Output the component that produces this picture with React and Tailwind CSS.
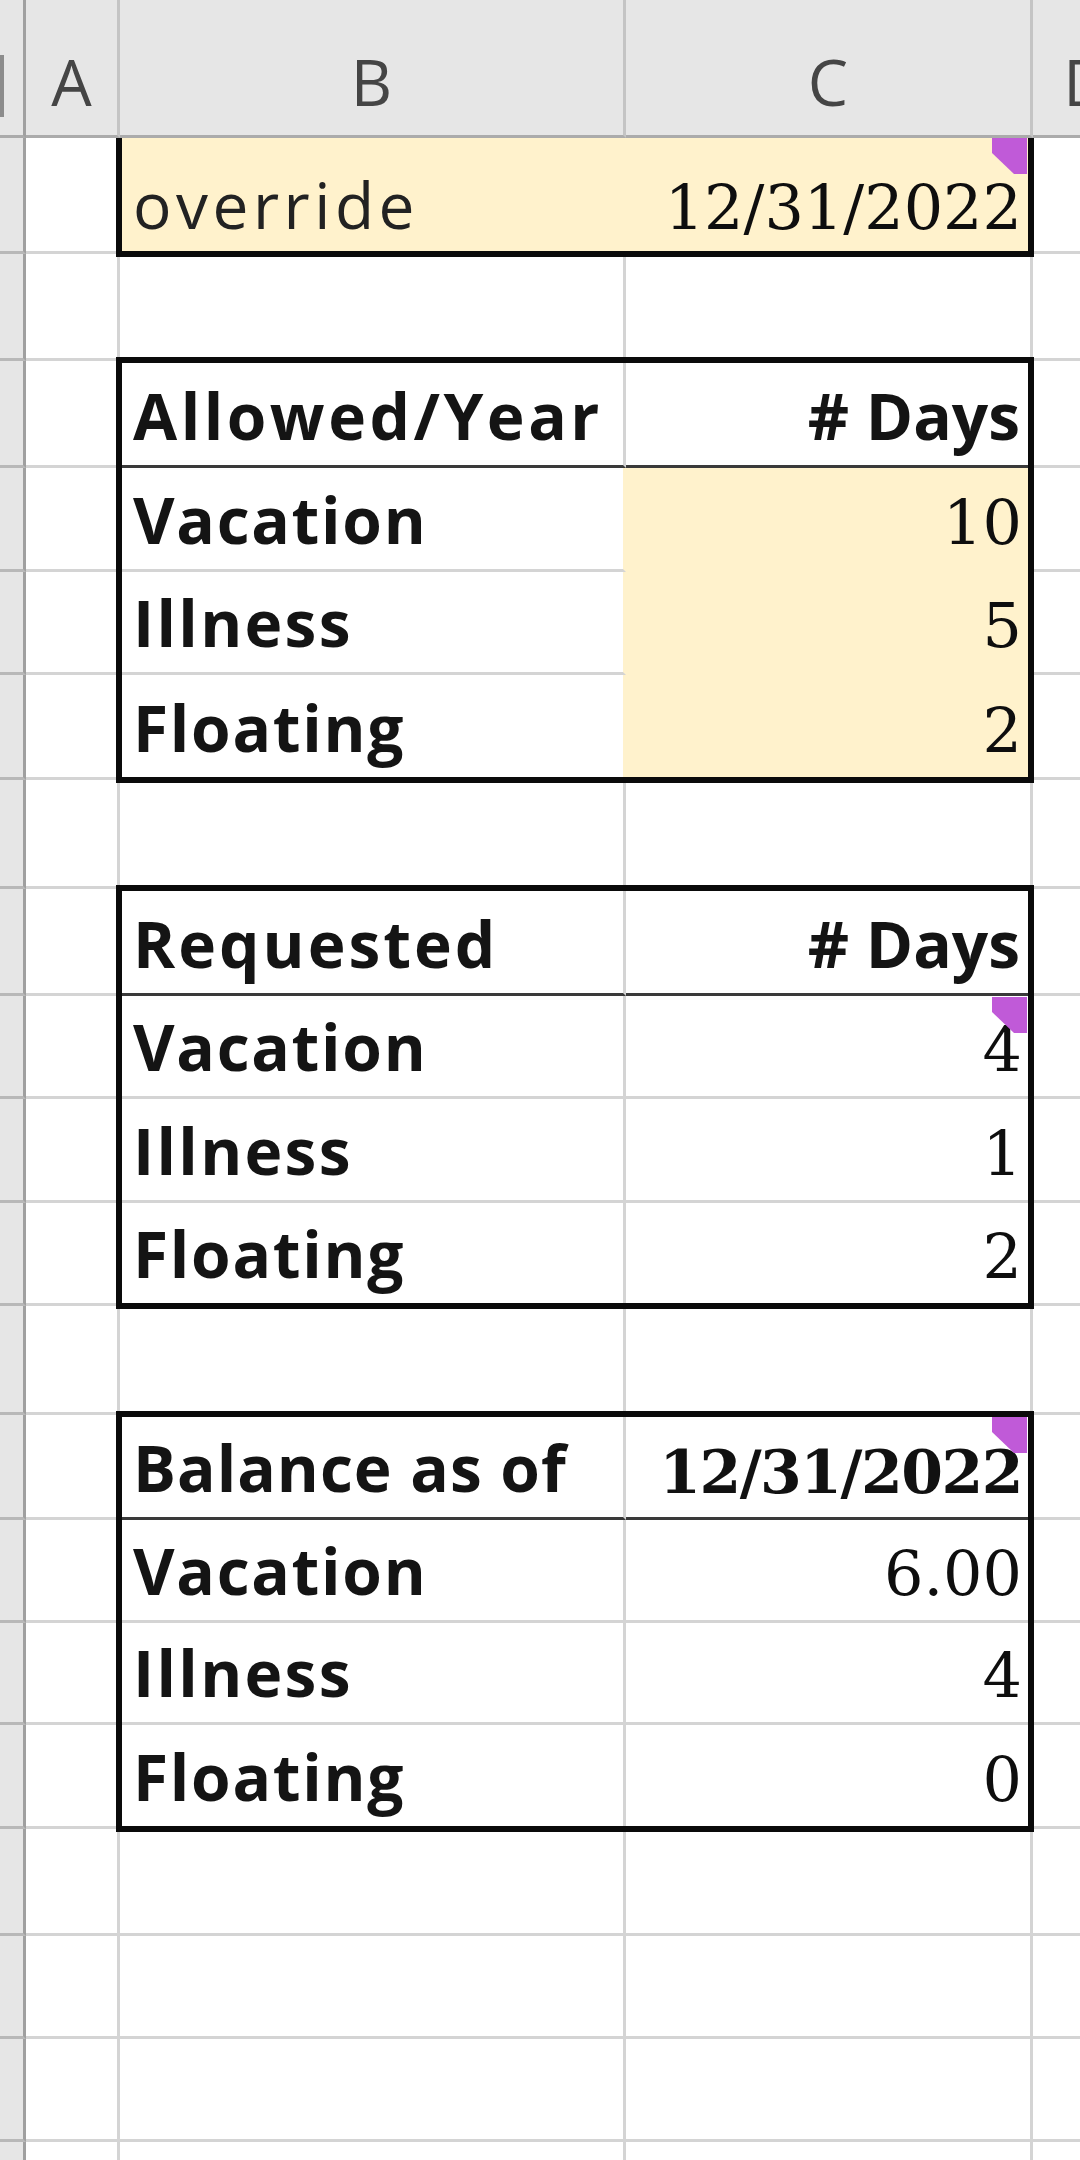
import React from "react";

const GRID =
  "grid w-max grid-cols-[26px_94px_506px_407px_110px] grid-rows-[138px_116px_107px_107px_104px_103px_105px_109px_107px_103px_104px_103px_109px_105px_103px_102px_104px_107px_103px_103px_60px]";

const SANS_LABEL = "font-['Open_Sans',sans-serif] font-bold text-[64px] leading-none text-[#141414] whitespace-nowrap";
const SANS_DAYS = "font-['Open_Sans',sans-serif] font-bold text-[64px] leading-none text-[#141414] whitespace-nowrap";
const SANS_REG = "font-['Open_Sans',sans-serif] font-normal text-[64px] tracking-[4.5px] leading-none text-[#222] whitespace-nowrap";
const SERIF_REG = "font-['DejaVu_Serif',serif] font-normal text-[62px] leading-none text-[#0e0e0e] whitespace-nowrap";
const SERIF_BOLD = "font-['DejaVu_Serif',serif] font-bold text-[60px] tracking-[-1.5px] leading-none text-[#111] whitespace-nowrap";

const GL = "bg-white border-r-[3px] border-b-[3px] border-[#d4d4d4]";
const ROWHEAD = "bg-[#e6e6e6] border-r-[3px] border-b-[3px] border-r-[#a0a0a0] border-b-[#b8b8b8]";

const rows = [
  { kind: "override" },
  { kind: "empty" },
  { kind: "head", label: "Allowed/Year", tr: "tracking-[3.5px]", value: "# Days" },
  { kind: "data", label: "Vacation", tr: "tracking-[1.7px]", value: "10", fill: true },
  { kind: "data", label: "Illness", tr: "tracking-[2.3px]", value: "5", fill: true },
  { kind: "data", label: "Floating", tr: "tracking-[1.7px]", value: "2", fill: true },
  { kind: "empty" },
  { kind: "head", label: "Requested", tr: "tracking-[3px]", value: "# Days" },
  { kind: "data", label: "Vacation", tr: "tracking-[1.7px]", value: "4" },
  { kind: "data", label: "Illness", tr: "tracking-[2.3px]", value: "1" },
  { kind: "data", label: "Floating", tr: "tracking-[1.7px]", value: "2" },
  { kind: "empty" },
  { kind: "head", label: "Balance as of", tr: "tracking-[1px]", value: "12/31/2022", serifBold: true },
  { kind: "data", label: "Vacation", tr: "tracking-[1.7px]", value: "6.00" },
  { kind: "data", label: "Illness", tr: "tracking-[2.3px]", value: "4" },
  { kind: "data", label: "Floating", tr: "tracking-[1.7px]", value: "0" },
  { kind: "empty" },
  { kind: "empty" },
  { kind: "empty" },
  { kind: "empty" },
];

function BCell({ row }) {
  if (row.kind === "override")
    return (
      <div className="bg-[#fff2cc] border-r-[3px] border-b-[3px] border-[#fff2cc] flex items-end pl-[13px] pb-[14px]">
        <span className={SANS_REG}>override</span>
      </div>
    );
  if (row.kind === "head")
    return (
      <div className="bg-white border-r-[3px] border-b-[3px] border-r-[#d4d4d4] border-b-[#3a3a3a] flex items-end pl-[13px] pb-[17px]">
        <span className={`${SANS_LABEL} ${row.tr}`}>{row.label}</span>
      </div>
    );
  if (row.kind === "data")
    return (
      <div
        className={
          row.fill
            ? "bg-white border-r-[3px] border-b-[3px] border-r-[#fff2cc] border-b-[#d4d4d4] flex items-end pl-[13px] pb-[17px]"
            : "bg-white border-r-[3px] border-b-[3px] border-[#d4d4d4] flex items-end pl-[13px] pb-[17px]"
        }
      >
        <span className={`${SANS_LABEL} ${row.tr}`}>{row.label}</span>
      </div>
    );
  return <div className={GL} />;
}

function CCell({ row }) {
  if (row.kind === "override")
    return (
      <div className="bg-[#fff2cc] border-r-[3px] border-b-[3px] border-[#fff2cc] flex items-end justify-end pr-[8px] pb-[12px]">
        <span className={SERIF_REG}>12/31/2022</span>
      </div>
    );
  if (row.kind === "head")
    return (
      <div
        className={
          row.serifBold
            ? "bg-white border-r-[3px] border-b-[3px] border-r-[#d4d4d4] border-b-[#3a3a3a] flex items-end justify-end pr-[8px] pb-[15px]"
            : "bg-white border-r-[3px] border-b-[3px] border-r-[#d4d4d4] border-b-[#3a3a3a] flex items-end justify-end pr-[10px] pb-[17px]"
        }
      >
        <span className={row.serifBold ? SERIF_BOLD : SANS_DAYS}>{row.value}</span>
      </div>
    );
  if (row.kind === "data")
    return (
      <div
        className={
          row.fill
            ? "bg-[#fff2cc] border-r-[3px] border-b-[3px] border-[#fff2cc] flex items-end justify-end pr-[8px] pb-[15px]"
            : "bg-white border-r-[3px] border-b-[3px] border-[#d4d4d4] flex items-end justify-end pr-[8px] pb-[15px]"
        }
      >
        <span className={SERIF_REG}>{row.value}</span>
      </div>
    );
  return <div className={GL} />;
}

const HEAD_CELL =
  "bg-[#e6e6e6] border-r-[3px] border-b-[3px] border-r-[#c4c4c4] border-b-[#ababab] flex items-end justify-center pb-[21px] font-['Open_Sans',sans-serif] text-[64px] leading-none text-[#454545]";

function Marker() {
  return (
    <svg width="35" height="36" viewBox="0 0 35 36" className="block">
      <polygon points="0,0 35,0 35,36 22,36 0,15" fill="#c05ad8" />
    </svg>
  );
}

export default function App() {
  return (
    <div className="w-[1080px] h-[2160px] overflow-hidden bg-white">
      <div className="grid w-max">
        {/* base sheet */}
        <div className={`${GRID} col-start-1 row-start-1`}>
          {/* header row */}
          <div className="bg-[#e6e6e6] border-r-[3px] border-b-[3px] border-r-[#a0a0a0] border-b-[#ababab] pt-[55px]">
            <div className="w-[4px] h-[62px] bg-[#8c8c8c]" />
          </div>
          <div className={HEAD_CELL}>A</div>
          <div className={HEAD_CELL}>B</div>
          <div className={HEAD_CELL}>C</div>
          <div className={HEAD_CELL}>D</div>

          {rows.map((row, i) => (
            <React.Fragment key={i}>
              <div className={ROWHEAD} />
              <div className={GL} />
              <BCell row={row} />
              <CCell row={row} />
              <div className={GL} />
            </React.Fragment>
          ))}
        </div>

        {/* overlay: thick table borders and comment markers */}
        <div className={`${GRID} col-start-1 row-start-1 pointer-events-none`}>
          <div className="col-start-3 col-end-5 row-start-2 row-end-3 border-x-[6px] border-b-[6px] border-[#0a0a0a] ml-[-4px] mr-[-1px] mb-[-3px]" />
          <div className="col-start-3 col-end-5 row-start-4 row-end-8 border-[6px] border-[#0a0a0a] ml-[-4px] mr-[-1px] mt-[-4px] mb-[-3px]" />
          <div className="col-start-3 col-end-5 row-start-9 row-end-13 border-[6px] border-[#0a0a0a] ml-[-4px] mr-[-1px] mt-[-4px] mb-[-3px]" />
          <div className="col-start-3 col-end-5 row-start-14 row-end-18 border-[6px] border-[#0a0a0a] ml-[-4px] mr-[-1px] mt-[-4px] mb-[-3px]" />

          <div className="col-start-4 row-start-2 justify-self-end self-start mr-[6px]">
            <Marker />
          </div>
          <div className="col-start-4 row-start-10 justify-self-end self-start mr-[6px] mt-[1px]">
            <Marker />
          </div>
          <div className="col-start-4 row-start-14 justify-self-end self-start mr-[6px] mt-[2px]">
            <Marker />
          </div>
        </div>
      </div>
    </div>
  );
}
